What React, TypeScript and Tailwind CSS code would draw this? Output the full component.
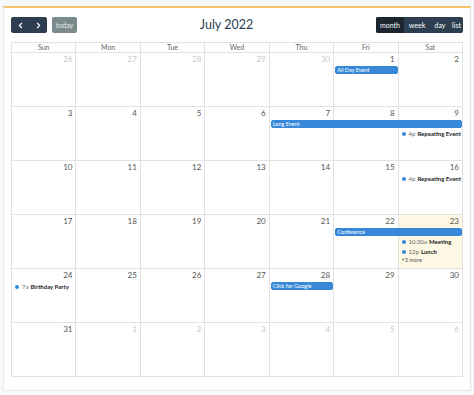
import { ChevronLeft, ChevronRight } from "lucide-react";

type Ev =
  | { kind: "block"; col: number; span: number; row: number; title: string }
  | { kind: "dot"; col: number; row: number; time: string; title: string }
  | { kind: "more"; col: number; row: number; title: string };

const colStart = ["col-start-1", "col-start-2", "col-start-3", "col-start-4", "col-start-5", "col-start-6", "col-start-7"];
const colSpan = ["col-span-1", "col-span-2", "col-span-3"];
const rowStart = ["row-start-1", "row-start-2", "row-start-3", "row-start-4", "row-start-5"];

const weeks: { days: number[]; other: boolean[]; events: Ev[] }[] = [
  {
    days: [26, 27, 28, 29, 30, 1, 2],
    other: [true, true, true, true, true, false, false],
    events: [{ kind: "block", col: 6, span: 1, row: 2, title: "All Day Event" }],
  },
  {
    days: [3, 4, 5, 6, 7, 8, 9],
    other: [false, false, false, false, false, false, false],
    events: [
      { kind: "block", col: 5, span: 3, row: 2, title: "Long Event" },
      { kind: "dot", col: 7, row: 3, time: "4p", title: "Repeating Event" },
    ],
  },
  {
    days: [10, 11, 12, 13, 14, 15, 16],
    other: [false, false, false, false, false, false, false],
    events: [{ kind: "dot", col: 7, row: 2, time: "4p", title: "Repeating Event" }],
  },
  {
    days: [17, 18, 19, 20, 21, 22, 23],
    other: [false, false, false, false, false, false, false],
    events: [
      { kind: "block", col: 6, span: 2, row: 2, title: "Conference" },
      { kind: "dot", col: 7, row: 3, time: "10:30a", title: "Meeting" },
      { kind: "dot", col: 7, row: 4, time: "12p", title: "Lunch" },
      { kind: "more", col: 7, row: 5, title: "+3 more" },
    ],
  },
  {
    days: [24, 25, 26, 27, 28, 29, 30],
    other: [false, false, false, false, false, false, false],
    events: [
      { kind: "dot", col: 1, row: 2, time: "7a", title: "Birthday Party" },
      { kind: "block", col: 5, span: 1, row: 2, title: "Click for Google" },
    ],
  },
  {
    days: [31, 1, 2, 3, 4, 5, 6],
    other: [false, true, true, true, true, true, true],
    events: [],
  },
];

const dayNames = ["Sun", "Mon", "Tue", "Wed", "Thu", "Fri", "Sat"];

function EventItem({ ev }: { ev: Ev }) {
  const place = `${colStart[ev.col - 1]} ${rowStart[ev.row - 1]}`;
  if (ev.kind === "block") {
    return (
      <div className={`${place} ${colSpan[ev.span - 1]} self-start mx-px h-[8px] rounded-[2px] bg-[#3788d8] border border-[#3788d8] text-white text-[5.5px] leading-[6px] pl-px truncate z-10`}>
        {ev.title}
      </div>
    );
  }
  if (ev.kind === "more") {
    return (
      <div className={`${place} self-start pl-[3px] text-[5.5px] leading-[8px] text-[#555]`}>{ev.title}</div>
    );
  }
  return (
    <div className={`${place} self-center flex items-center pl-[3px] text-[6px] leading-[8px] whitespace-nowrap`}>
      <span className="shrink-0 w-[4px] h-[4px] rounded-full bg-[#3788d8] mr-[3px]" />
      <span className="text-[#666] mr-[2px]">{ev.time}</span>
      <span className="font-bold text-[#222]">{ev.title}</span>
    </div>
  );
}

export default function App() {
  return (
    <div className="w-[474px] h-[395px] bg-[#f6f8fa] px-[3px] pt-[6px] pb-[4px] font-['Lato',sans-serif]">
      <div className="h-full bg-white border border-[#e6e9ec] border-t-2 border-t-[#f7c56e] px-[7px] pt-[9px]">
        {/* toolbar */}
        <div className="flex items-center justify-between h-[16px] mb-[9px]">
          <div className="flex items-center gap-[5px]">
            <div className="flex h-[16px] rounded-[2px] bg-[#2c3e50] text-white">
              <button className="w-[18px] flex items-center justify-center">
                <ChevronLeft size={9} strokeWidth={3} />
              </button>
              <button className="w-[18px] flex items-center justify-center">
                <ChevronRight size={9} strokeWidth={3} />
              </button>
            </div>
            <button className="h-[16px] w-[25px] rounded-[2px] bg-[#7b8a8b] text-[#e8ecec] text-[7px] leading-none">
              today
            </button>
          </div>
          <h2 className="text-[12.5px] leading-none text-[#2c3e50]">July 2022</h2>
          <div className="flex h-[16px] w-[87px] rounded-[2px] bg-[#2c3e50] text-white text-[7px] overflow-hidden">
            <button className="w-[28px] bg-[#1a252f]">month</button>
            <button className="w-[26px]">week</button>
            <button className="w-[20px]">day</button>
            <button className="w-[13px]">list</button>
          </div>
        </div>

        {/* month grid */}
        <div className="border-l border-t border-[#e2e2e2]">
          <div className="grid grid-cols-7 h-[10px]">
            {dayNames.map((d) => (
              <div key={d} className="border-r border-b border-[#e2e2e2] text-center text-[7px] leading-[9px] text-[#666]">
                {d}
              </div>
            ))}
          </div>
          {weeks.map((w, wi) => (
            <div key={wi} className="grid grid-cols-7 grid-rows-[13px_9px_10px_9px_1fr] h-[54px]">
              {w.days.map((d, di) => {
                const today = wi === 3 && di === 6;
                return (
                  <div
                    key={di}
                    className={`${colStart[di]} row-start-1 row-span-5 border-r border-b border-[#e2e2e2] ${today ? "bg-[#fcf8e3]" : ""}`}
                  >
                    <div className={`text-right pr-[3px] text-[8px] leading-[12px] ${w.other[di] ? "text-[#c8c8c8]" : "text-[#555]"}`}>
                      {d}
                    </div>
                  </div>
                );
              })}
              {w.events.map((ev, ei) => (
                <EventItem key={ei} ev={ev} />
              ))}
            </div>
          ))}
        </div>
      </div>
    </div>
  );
}
